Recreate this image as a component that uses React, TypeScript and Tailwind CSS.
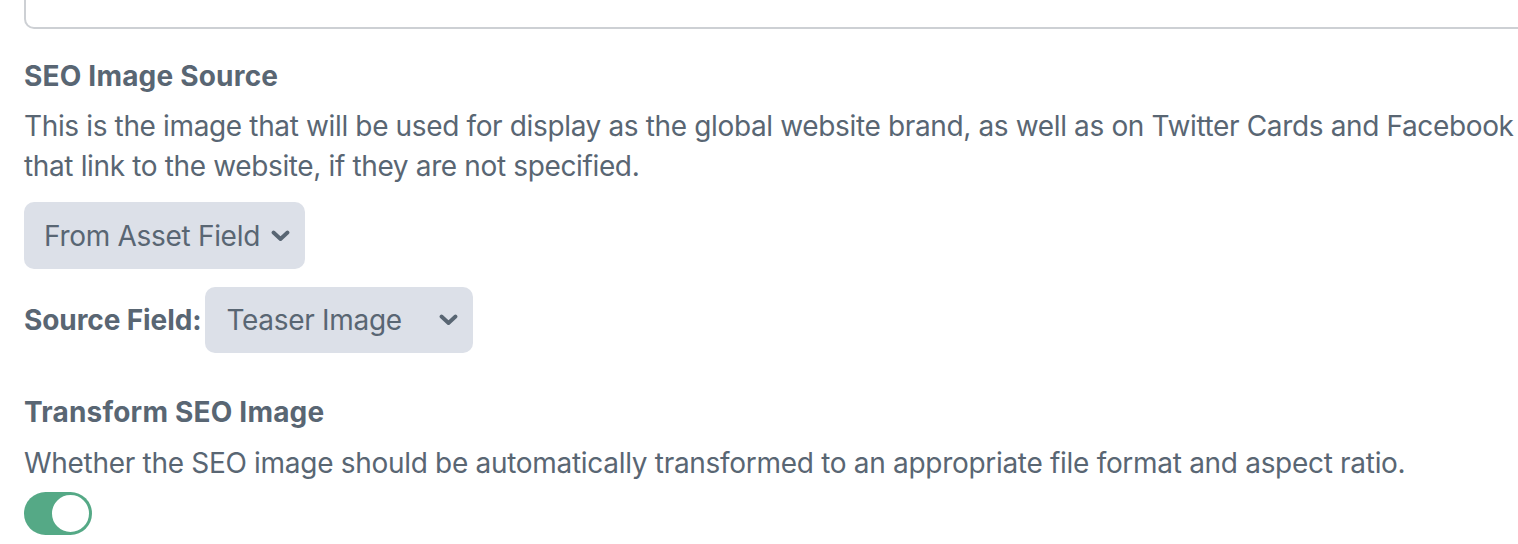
import React from "react";

function Chevron({ className = "" }: { className?: string }) {
  return (
    <svg
      className={className}
      width="19"
      height="12"
      viewBox="0 0 19 12"
      fill="none"
      stroke="#596673"
      strokeWidth="3.8"
      strokeLinecap="round"
      strokeLinejoin="round"
    >
      <path d="M2.5 2.5 L9.5 9 L16.5 2.5" />
    </svg>
  );
}

export default function App() {
  return (
    <div
      className="w-[1518px] h-[544px] overflow-hidden bg-white text-[#596673]"
      style={{ fontFamily: "Inter, 'Noto Sans', sans-serif" }}
    >
      <div className="pl-6 w-[1560px]">
        <div className="-mt-[10px] border-2 border-t-0 border-[#cdd0d4] rounded-b-[10px] h-[39px]" />

        <div className="mt-[27px] text-[28px] leading-[40px] font-bold tracking-[0.2px]">SEO Image Source</div>
        <div className="mt-[10px] text-[28px] leading-[40px] whitespace-nowrap tracking-[-0.36px]">
          This is the image that will be used for display as the global website brand, as well as on Twitter Cards and Facebook
          <br />
          that link to the website, if they are not specified.
        </div>

        <div className="mt-4 flex">
          <div className="h-[67px] rounded-[10px] bg-[#dce0e8] flex items-center pl-5 pr-[15px] gap-[11px] text-[28px] tracking-[-0.3px]">
            <span>From Asset Field</span>
            <Chevron />
          </div>
        </div>

        <div className="mt-[18px] flex items-center gap-1">
          <span className="text-[28px] font-bold tracking-[-0.1px]">Source Field:</span>
          <div className="h-[66px] w-[268px] rounded-[10px] bg-[#dce0e8] flex items-center justify-between pl-[21px] pr-[15px] text-[28px] tracking-[-0.3px]">
            <span>Teaser Image</span>
            <Chevron />
          </div>
        </div>

        <div className="mt-[39px] text-[28px] leading-[40px] font-bold tracking-[0.2px]">Transform SEO Image</div>
        <div className="mt-[11px] text-[28px] leading-[40px] whitespace-nowrap tracking-[-0.3px]">
          Whether the SEO image should be automatically transformed to an appropriate file format and aspect ratio.
        </div>

        <div className="mt-[9px] w-[68px] h-[43px] rounded-full bg-[#55a986] flex items-center justify-end pr-[1px]">
          <div className="w-[41px] h-[41px] rounded-full bg-white border-2 border-[#55a986]" />
        </div>
      </div>
    </div>
  );
}
